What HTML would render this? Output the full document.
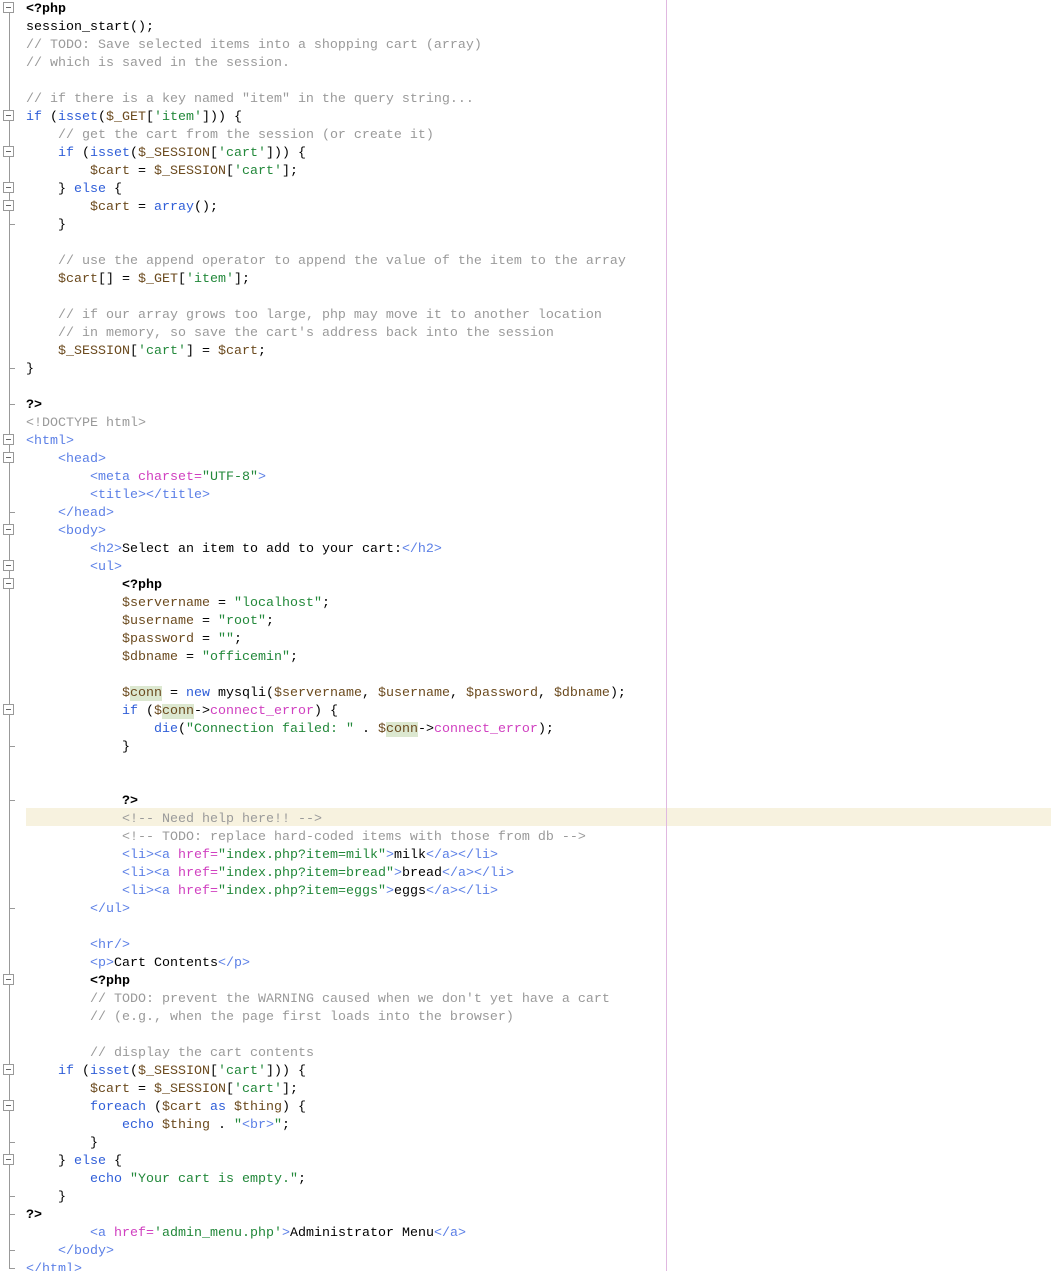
<!DOCTYPE html>
<html><head><meta charset="utf-8"><style>
html,body{margin:0;padding:0;background:#fff;width:1051px;height:1271px;overflow:hidden;position:relative}
pre{position:absolute;left:26px;top:1px;margin:0;font-family:"Liberation Mono",monospace;font-size:13.33px;line-height:18px;color:#000;white-space:pre}
.k{color:#2f5ed8}.v{color:#6b4a1e}.s{color:#22883a}.c{color:#9a9a9a}.t{color:#5b7fe6}.a{color:#d040c0}.b{font-weight:bold}
.cn{background:#dce8d0}
.hl{position:absolute;left:26px;top:808px;width:1025px;height:18px;background:#f7f2df}
.rm{position:absolute;left:666px;top:0;width:1px;height:1271px;background:#e0b8e0}
.gl{position:absolute;left:9px;top:13px;width:1px;height:1256px;background:#999}
.fb{position:absolute;left:3px;width:11px;height:11px;border:1px solid #999;background:#fff;box-sizing:border-box}
.fb:after{content:"";position:absolute;left:2px;top:4px;width:5px;height:1px;background:#666}
.tk{position:absolute;left:9px;width:6px;height:1px;background:#999}
</style></head><body>
<div class="hl"></div>
<div class="rm"></div>
<div class="gl"></div>
<div class="fb" style="top:2px"></div>
<div class="fb" style="top:110px"></div>
<div class="fb" style="top:146px"></div>
<div class="fb" style="top:182px"></div>
<div class="fb" style="top:200px"></div>
<div class="tk" style="top:224px"></div>
<div class="tk" style="top:368px"></div>
<div class="tk" style="top:404px"></div>
<div class="fb" style="top:434px"></div>
<div class="fb" style="top:452px"></div>
<div class="tk" style="top:512px"></div>
<div class="fb" style="top:524px"></div>
<div class="fb" style="top:560px"></div>
<div class="fb" style="top:578px"></div>
<div class="fb" style="top:704px"></div>
<div class="tk" style="top:746px"></div>
<div class="tk" style="top:800px"></div>
<div class="tk" style="top:908px"></div>
<div class="fb" style="top:974px"></div>
<div class="fb" style="top:1064px"></div>
<div class="fb" style="top:1100px"></div>
<div class="tk" style="top:1142px"></div>
<div class="fb" style="top:1154px"></div>
<div class="tk" style="top:1196px"></div>
<div class="tk" style="top:1214px"></div>
<div class="tk" style="top:1250px"></div>
<div class="tk" style="top:1268px"></div>
<pre><span class="b">&lt;?php</span>
session_start();
<span class="c">// TODO: Save selected items into a shopping cart (array)</span>
<span class="c">// which is saved in the session.</span>

<span class="c">// if there is a key named "item" in the query string...</span>
<span class="k">if</span> (<span class="k">isset</span>(<span class="v">$_GET</span>[<span class="s">'item'</span>])) {
    <span class="c">// get the cart from the session (or create it)</span>
    <span class="k">if</span> (<span class="k">isset</span>(<span class="v">$_SESSION</span>[<span class="s">'cart'</span>])) {
        <span class="v">$cart</span> = <span class="v">$_SESSION</span>[<span class="s">'cart'</span>];
    } <span class="k">else</span> {
        <span class="v">$cart</span> = <span class="k">array</span>();
    }

    <span class="c">// use the append operator to append the value of the item to the array</span>
    <span class="v">$cart</span>[] = <span class="v">$_GET</span>[<span class="s">'item'</span>];

    <span class="c">// if our array grows too large, php may move it to another location</span>
    <span class="c">// in memory, so save the cart's address back into the session</span>
    <span class="v">$_SESSION</span>[<span class="s">'cart'</span>] = <span class="v">$cart</span>;
}

<span class="b">?&gt;</span>
<span class="c">&lt;!DOCTYPE html&gt;</span>
<span class="t">&lt;html&gt;</span>
    <span class="t">&lt;head&gt;</span>
        <span class="t">&lt;meta</span> <span class="a">charset=</span><span class="s">"UTF-8"</span><span class="t">&gt;</span>
        <span class="t">&lt;title&gt;&lt;/title&gt;</span>
    <span class="t">&lt;/head&gt;</span>
    <span class="t">&lt;body&gt;</span>
        <span class="t">&lt;h2&gt;</span>Select an item to add to your cart:<span class="t">&lt;/h2&gt;</span>
        <span class="t">&lt;ul&gt;</span>
            <span class="b">&lt;?php</span>
            <span class="v">$servername</span> = <span class="s">"localhost"</span>;
            <span class="v">$username</span> = <span class="s">"root"</span>;
            <span class="v">$password</span> = <span class="s">""</span>;
            <span class="v">$dbname</span> = <span class="s">"officemin"</span>;

            <span class="v">$<span class="cn">conn</span></span> = <span class="k">new</span> mysqli(<span class="v">$servername</span>, <span class="v">$username</span>, <span class="v">$password</span>, <span class="v">$dbname</span>);
            <span class="k">if</span> (<span class="v">$<span class="cn">conn</span></span>-&gt;<span class="a">connect_error</span>) {
                <span class="k">die</span>(<span class="s">"Connection failed: "</span> . <span class="v">$<span class="cn">conn</span></span>-&gt;<span class="a">connect_error</span>);
            }


            <span class="b">?&gt;</span>
            <span class="c">&lt;!-- Need help here!! --&gt;</span>
            <span class="c">&lt;!-- TODO: replace hard-coded items with those from db --&gt;</span>
            <span class="t">&lt;li&gt;&lt;a</span> <span class="a">href=</span><span class="s">"index.php?item=milk"</span><span class="t">&gt;</span>milk<span class="t">&lt;/a&gt;&lt;/li&gt;</span>
            <span class="t">&lt;li&gt;&lt;a</span> <span class="a">href=</span><span class="s">"index.php?item=bread"</span><span class="t">&gt;</span>bread<span class="t">&lt;/a&gt;&lt;/li&gt;</span>
            <span class="t">&lt;li&gt;&lt;a</span> <span class="a">href=</span><span class="s">"index.php?item=eggs"</span><span class="t">&gt;</span>eggs<span class="t">&lt;/a&gt;&lt;/li&gt;</span>
        <span class="t">&lt;/ul&gt;</span>

        <span class="t">&lt;hr/&gt;</span>
        <span class="t">&lt;p&gt;</span>Cart Contents<span class="t">&lt;/p&gt;</span>
        <span class="b">&lt;?php</span>
        <span class="c">// TODO: prevent the WARNING caused when we don't yet have a cart</span>
        <span class="c">// (e.g., when the page first loads into the browser)</span>

        <span class="c">// display the cart contents</span>
    <span class="k">if</span> (<span class="k">isset</span>(<span class="v">$_SESSION</span>[<span class="s">'cart'</span>])) {
        <span class="v">$cart</span> = <span class="v">$_SESSION</span>[<span class="s">'cart'</span>];
        <span class="k">foreach</span> (<span class="v">$cart</span> <span class="k">as</span> <span class="v">$thing</span>) {
            <span class="k">echo</span> <span class="v">$thing</span> . <span class="s">"<span class="t">&lt;br&gt;</span>"</span>;
        }
    } <span class="k">else</span> {
        <span class="k">echo</span> <span class="s">"Your cart is empty."</span>;
    }
<span class="b">?&gt;</span>
        <span class="t">&lt;a</span> <span class="a">href=</span><span class="s">'admin_menu.php'</span><span class="t">&gt;</span>Administrator Menu<span class="t">&lt;/a&gt;</span>
    <span class="t">&lt;/body&gt;</span>
<span class="t">&lt;/html&gt;</span></pre>
</body></html>
